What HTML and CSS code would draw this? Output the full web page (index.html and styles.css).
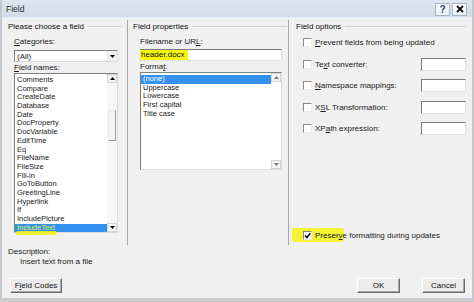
FILE: index.html
```html
<!DOCTYPE html>
<html lang="en">
<head>
    <meta charset="UTF-8">
    <meta name="viewport" content="width=device-width, initial-scale=1.0">
    <title>Field</title>
    <link rel="stylesheet" href="styles.css">
</head>
<body>
    <div class="dialog">
        <div class="titlebar">
            <span class="title">Field</span>
            <div class="caption-buttons">
                <span class="cap-btn help">?</span>
                <span class="cap-btn close">
                    <svg width="8" height="8" viewBox="0 0 8 8"><path d="M1 1 L7 7 M7 1 L1 7" stroke="#111" stroke-width="1.8"/></svg>
                </span>
            </div>
        </div>

        <div class="panels">
            <!-- Left: choose a field -->
            <div class="panel panel-left">
                <div class="group-head"><span>Please choose a field</span></div>
                <div class="label"><u>C</u>ategories:</div>
                <div class="combo">
                    <span class="combo-value">(All)</span>
                    <span class="combo-btn">
                        <svg width="5" height="3" viewBox="0 0 5 3"><path d="M0 0 L5 0 L2.5 3Z" fill="#000"/></svg>
                    </span>
                </div>
                <div class="label"><u>F</u>ield names:</div>
                <div class="listbox names-list">
                    <ul class="items">
                        <li>Comments</li>
                        <li>Compare</li>
                        <li>CreateDate</li>
                        <li>Database</li>
                        <li>Date</li>
                        <li>DocProperty</li>
                        <li>DocVariable</li>
                        <li>EditTime</li>
                        <li>Eq</li>
                        <li>FileName</li>
                        <li>FileSize</li>
                        <li>Fill-in</li>
                        <li>GoToButton</li>
                        <li>GreetingLine</li>
                        <li>Hyperlink</li>
                        <li>If</li>
                        <li>IncludePicture</li>
                        <li class="selected"><span class="marker-green">IncludeText</span></li>
                    </ul>
                    <div class="vscroll">
                        <span class="arrow">
                            <svg width="5" height="3" viewBox="0 0 5 3"><path d="M0 3 L5 3 L2.5 0Z" fill="#000"/></svg>
                        </span>
                        <span class="track"><span class="thumb"></span></span>
                        <span class="arrow">
                            <svg width="5" height="3" viewBox="0 0 5 3"><path d="M0 0 L5 0 L2.5 3Z" fill="#000"/></svg>
                        </span>
                    </div>
                </div>
            </div>

            <!-- Middle: field properties -->
            <div class="panel panel-mid">
                <div class="group-head"><span>Field properties</span></div>
                <div class="label">Filename or UR<u>L</u>:</div>
                <div class="textbox wide"><span class="marker">header.docx</span></div>
                <div class="label">Forma<u>t</u>:</div>
                <div class="listbox format-list">
                    <ul class="items">
                        <li class="selected">(none)</li>
                        <li>Uppercase</li>
                        <li>Lowercase</li>
                        <li>First capital</li>
                        <li>Title case</li>
                    </ul>
                    <div class="vscroll plain">
                        <span class="arrow">
                            <svg width="5" height="3" viewBox="0 0 5 3"><path d="M0 3 L5 3 L2.5 0Z" fill="#777"/></svg>
                        </span>
                        <span class="track"></span>
                        <span class="arrow">
                            <svg width="5" height="3" viewBox="0 0 5 3"><path d="M0 0 L5 0 L2.5 3Z" fill="#777"/></svg>
                        </span>
                    </div>
                </div>
            </div>

            <!-- Right: field options -->
            <div class="panel panel-right">
                <div class="group-head"><span>Field options</span></div>
                <div class="option">
                    <span class="check"></span>
                    <span class="option-text"><u>P</u>revent fields from being updated</span>
                </div>
                <div class="option">
                    <span class="check"></span>
                    <span class="option-text">Te<u>x</u>t converter:</span>
                    <span class="textbox small"></span>
                </div>
                <div class="option">
                    <span class="check"></span>
                    <span class="option-text"><u>N</u>amespace mappings:</span>
                    <span class="textbox small"></span>
                </div>
                <div class="option">
                    <span class="check"></span>
                    <span class="option-text">X<u>S</u>L Transformation:</span>
                    <span class="textbox small"></span>
                </div>
                <div class="option">
                    <span class="check"></span>
                    <span class="option-text">XP<u>a</u>th expression:</span>
                    <span class="textbox small"></span>
                </div>
                <div class="option preserve">
                    <span class="preserve-mark"></span>
                    <span class="check checked">
                        <svg width="7" height="7" viewBox="0 0 7 7"><path d="M1 3.5 L3 5.5 L6.2 1.2" stroke="#000" stroke-width="1.6" fill="none"/></svg>
                    </span>
                    <span class="option-text">Preser<u>v</u>e formatting during updates</span>
                </div>
            </div>
        </div>

        <div class="footer">
            <div class="description">
                <div class="desc-label">Description:</div>
                <div class="desc-text">Insert text from a file</div>
                <button class="btn codes">F<u>i</u>eld Codes</button>
            </div>
            <div class="actions">
                <button class="btn">OK</button>
                <button class="btn">Cancel</button>
            </div>
        </div>
    </div>
</body>
</html>
```

FILE: styles.css
```css
body {
    margin: 0;
    font-family: 'Liberation Sans', Arial, sans-serif;
    font-size: 8px;
    color: #1a1a1a;
    background-color: #f0f0f0;
}

u {
    text-decoration-thickness: 1px;
    text-underline-offset: 1px;
}

.dialog {
    width: 474px;
    height: 302px;
    box-sizing: border-box;
    display: flex;
    flex-direction: column;
    background-color: #f0f0f0;
    border-left: 2px solid #c3c9d0;
    border-right: 2px solid #c3c9d0;
    border-bottom: 4px solid #cbcbcb;
}

/* title bar */
.titlebar {
    height: 17px;
    display: flex;
    align-items: center;
    justify-content: space-between;
    padding: 0 5px 0 4px;
    background: linear-gradient(#dde7f2, #d1dde9);
    border-bottom: 1px solid #e9edf2;
}

.title {
    font-size: 8.5px;
    color: #2a2a2a;
}

.caption-buttons {
    display: flex;
    gap: 2px;
    margin-top: 1px;
}

.cap-btn {
    width: 15px;
    height: 13px;
    display: flex;
    align-items: center;
    justify-content: center;
    background: linear-gradient(#fdfdfd, #e9eef4);
    border: 1px solid #a9b4c1;
    box-sizing: border-box;
}

.help {
    font-size: 10px;
    font-weight: bold;
    color: #24427a;
}

/* panels */
.panels {
    height: 228px;
    display: flex;
}

.panel {
    display: flex;
    flex-direction: column;
    box-sizing: border-box;
}

.panel-left {
    width: 125px;
    padding: 3px 5px 0 6px;
}

.panel-mid {
    width: 162px;
    height: 225px;
    margin-top: 2px;
    padding: 1px 1px 0 5px;
    border-left: 1px solid #a4a4a4;
    border-right: 1px solid #a4a4a4;
}

.panel-right {
    flex: 1;
    padding: 3px 6px 0 7px;
}

.group-head {
    display: flex;
    align-items: center;
    height: 11px;
    line-height: 11px;
    color: #111;
}

.group-head::after {
    content: "";
    flex: 1;
    margin-left: 4px;
    border-top: 1px solid #d2d2d2;
}

.label {
    height: 11px;
    line-height: 11px;
    margin-left: 6px;
}

.panel-left .label:nth-of-type(2) {
    margin-top: 4px;
}

.panel-left .label:nth-of-type(3) {
    margin-top: 2px;
}

.panel-mid .label {
    margin-left: 7px;
}

.panel-mid .label:nth-of-type(2) {
    margin-top: 4px;
}

.panel-mid .label:nth-of-type(3) {
    margin-top: 1px;
}

/* inputs */
.combo {
    margin: 3px 0 0 6px;
    width: 104px;
    height: 12px;
    box-sizing: border-box;
    display: flex;
    align-items: center;
    justify-content: space-between;
    background-color: #fff;
    border: 1px solid #7f7f7f;
    border-right-color: #dadada;
    border-bottom-color: #dadada;
}

.combo-value {
    padding-left: 2px;
}

.combo-btn {
    width: 9px;
    height: 10px;
    display: flex;
    align-items: center;
    justify-content: center;
    background-color: #f2f2f2;
    border-left: 1px solid #e0e0e0;
}

.textbox {
    box-sizing: border-box;
    background-color: #fff;
    border: 1px solid #7b7b7b;
    border-right-color: #e2e2e2;
    border-bottom-color: #e2e2e2;
}

.textbox.wide {
    margin: 2px 0 0 7px;
    width: 142px;
    height: 12px;
    display: flex;
    align-items: center;
}

.textbox.small {
    width: 45px;
    height: 13px;
    margin-left: auto;
}

.marker {
    background-color: #f6f513;
    padding: 0 3px 0 1px;
    line-height: 10px;
    margin-left: -1px;
    color: #111;
}

/* list boxes */
.listbox {
    display: flex;
    box-sizing: border-box;
    background-color: #fff;
    border: 1px solid #7f7f7f;
    border-right-color: #dcdcdc;
    border-bottom-color: #dcdcdc;
}

.names-list {
    margin-left: 6px;
    width: 104px;
    height: 160px;
}

.format-list {
    margin-left: 7px;
    width: 142px;
    height: 98px;
}

.items {
    flex: 1;
    list-style: none;
    margin: 0;
    padding: 2px 0 0;
    font-size: 7.5px;
}

.items li {
    height: 8.7px;
    line-height: 8.7px;
    padding-left: 2px;
    white-space: nowrap;
}

.items li.selected {
    background-color: #3591f0;
    color: #fff;
}

.marker-green {
    position: relative;
    color: #dcf43a;
}

.marker-green::after {
    content: "";
    position: absolute;
    left: -1px;
    right: -2px;
    top: 8px;
    height: 4px;
    background-color: rgba(246, 245, 19, 0.85);
    border-radius: 2px;
}

.vscroll {
    width: 10px;
    display: flex;
    flex-direction: column;
    background-color: #f7f7f7;
}

.vscroll .arrow {
    height: 9px;
    display: flex;
    align-items: center;
    justify-content: center;
    background-color: #f4f4f4;
    border: 1px solid #d4d4d4;
    box-sizing: border-box;
}

.vscroll .track {
    flex: 1;
    padding-top: 27px;
}

.thumb {
    display: block;
    height: 31px;
    margin: 0 1px;
    box-sizing: border-box;
    background-color: #f2f2f2;
    border: 1px solid #9b9b9b;
    border-top-color: #e6e6e6;
    border-left-color: #e6e6e6;
}

.vscroll.plain {
    background-color: #fff;
}

/* options */
.option {
    height: 21.5px;
    display: flex;
    align-items: center;
    margin-left: 7px;
}

.check {
    width: 9px;
    height: 9px;
    box-sizing: border-box;
    margin-right: 3px;
    display: flex;
    align-items: center;
    justify-content: center;
    background-color: #fff;
    border: 1px solid #8a8a8a;
    border-right-color: #ececec;
    border-bottom-color: #ececec;
}

.option.preserve {
    position: relative;
    height: 11px;
    margin-top: auto;
    margin-bottom: 5px;
}

.preserve-mark {
    position: absolute;
    left: -11px;
    top: -2px;
    width: 52px;
    height: 14px;
    background-color: rgba(246, 245, 19, 0.85);
    border-radius: 3px;
}

.preserve .check,
.preserve .option-text {
    position: relative;
}

/* footer */
.footer {
    flex: 1;
    display: flex;
    justify-content: space-between;
    align-items: flex-end;
    padding: 1px 7px 5px 6px;
}

.description {
    align-self: stretch;
    display: flex;
    flex-direction: column;
    align-items: flex-start;
}

.desc-label,
.desc-text {
    height: 10px;
    line-height: 10px;
}

.desc-text {
    margin-left: 12px;
}

.btn {
    font-family: 'Liberation Sans', Arial, sans-serif;
    font-size: 8px;
    color: #111;
    width: 43px;
    height: 15px;
    padding: 0;
    background-color: #ececec;
    border: 1px solid;
    border-color: #ffffff #6a6a6a #6a6a6a #ffffff;
    box-shadow: inset -1px -1px #a8a8a8;
}

.btn.codes {
    width: 52px;
    margin-top: auto;
    margin-left: 2px;
}

.actions {
    display: flex;
    gap: 22px;
}
```
